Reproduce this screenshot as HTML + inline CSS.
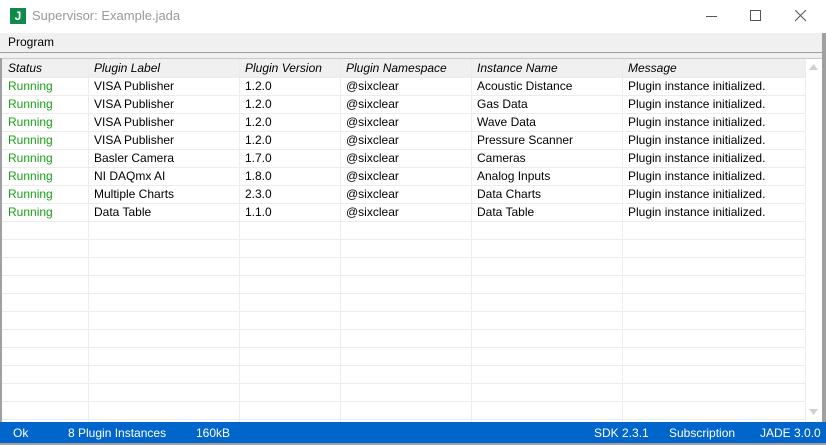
<!DOCTYPE html>
<html><head><style>
*{margin:0;padding:0;box-sizing:border-box}
body{width:826px;height:445px;overflow:hidden;background:#fff;font-family:"Liberation Sans",sans-serif;font-size:12px;color:#000;position:relative}
.a{position:absolute}
.t{position:absolute;white-space:nowrap;line-height:18px}
.hl{position:absolute;left:2px;width:803px;height:1px;background:#ececec}
.vl{position:absolute;top:59px;height:363px;width:1px;background:#ececec}
</style></head><body>
<div class="a" style="left:0;top:0;width:826px;height:33px;background:#fff"></div>
<div class="a" style="left:10px;top:8px;width:16px;height:16px;background:#0f8a4a;color:#fff;font-weight:bold;font-size:12px;line-height:16px;text-align:center">J</div>
<div class="t" style="left:32px;top:7px;font-size:13px;color:#999">Supervisor: Example.jada</div>
<div class="a" style="left:706px;top:16px;width:11px;height:1px;background:#555"></div>
<div class="a" style="left:750px;top:10px;width:11px;height:11px;border:1px solid #555"></div>
<svg class="a" style="left:795px;top:10px" width="12" height="12"><path d="M0 0L11 11M11 0L0 11" stroke="#555" stroke-width="1"/></svg>
<div class="a" style="left:0;top:33px;width:826px;height:19px;background:#f0f0f0"></div>
<div class="t" style="left:8px;top:33px;font-size:12px">Program</div>
<div class="a" style="left:0;top:52px;width:826px;height:1px;background:#a0a0a0"></div>
<div class="a" style="left:0;top:53px;width:826px;height:5px;background:#f0f0f0"></div>
<div class="a" style="left:0;top:58px;width:2px;height:366px;background:#a0a0a0"></div>
<div class="a" style="left:822px;top:33px;width:4px;height:412px;background:#a0a0a0"></div>
<div class="a" style="left:2px;top:58px;width:820px;height:1px;background:#c8c8c8"></div>
<div class="a" style="left:2px;top:59px;width:803px;height:18px;background:#f0f0f0"></div>
<div class="a" style="left:805px;top:59px;width:17px;height:363px;background:#fff;border-left:1px solid #ececec"></div>
<svg class="a" style="left:809px;top:64px" width="9" height="6"><path d="M0 6L4.5 0L9 6Z" fill="#d0d0d0"/></svg>
<svg class="a" style="left:809px;top:409px" width="9" height="6"><path d="M0 0L4.5 6L9 0Z" fill="#d0d0d0"/></svg>
<div class="hl" style="top:77px"></div><div class="hl" style="top:95px"></div><div class="hl" style="top:113px"></div><div class="hl" style="top:131px"></div><div class="hl" style="top:149px"></div><div class="hl" style="top:167px"></div><div class="hl" style="top:185px"></div><div class="hl" style="top:203px"></div><div class="hl" style="top:221px"></div><div class="hl" style="top:239px"></div><div class="hl" style="top:257px"></div><div class="hl" style="top:275px"></div><div class="hl" style="top:293px"></div><div class="hl" style="top:311px"></div><div class="hl" style="top:329px"></div><div class="hl" style="top:347px"></div><div class="hl" style="top:365px"></div><div class="hl" style="top:383px"></div><div class="hl" style="top:401px"></div><div class="hl" style="top:419px"></div>
<div class="vl" style="left:88px"></div><div class="vl" style="left:239px"></div><div class="vl" style="left:340px"></div><div class="vl" style="left:471px"></div><div class="vl" style="left:622px"></div>
<div style="position:absolute;left:0;top:59px;font-style:italic">
<div class="t" style="left:8px;top:0">Status</div><div class="t" style="left:94px;top:0">Plugin Label</div><div class="t" style="left:245px;top:0">Plugin Version</div><div class="t" style="left:346px;top:0">Plugin Namespace</div><div class="t" style="left:477px;top:0">Instance Name</div><div class="t" style="left:628px;top:0">Message</div>
</div>
<div style="position:absolute;left:0;top:77px">
<div class="t" style="left:8px;top:0;color:#1aa01a">Running</div><div class="t" style="left:94px;top:0">VISA Publisher</div><div class="t" style="left:245px;top:0">1.2.0</div><div class="t" style="left:346px;top:0">@sixclear</div><div class="t" style="left:477px;top:0">Acoustic Distance</div><div class="t" style="left:628px;top:0">Plugin instance initialized.</div>
<div class="t" style="left:8px;top:18px;color:#1aa01a">Running</div><div class="t" style="left:94px;top:18px">VISA Publisher</div><div class="t" style="left:245px;top:18px">1.2.0</div><div class="t" style="left:346px;top:18px">@sixclear</div><div class="t" style="left:477px;top:18px">Gas Data</div><div class="t" style="left:628px;top:18px">Plugin instance initialized.</div>
<div class="t" style="left:8px;top:36px;color:#1aa01a">Running</div><div class="t" style="left:94px;top:36px">VISA Publisher</div><div class="t" style="left:245px;top:36px">1.2.0</div><div class="t" style="left:346px;top:36px">@sixclear</div><div class="t" style="left:477px;top:36px">Wave Data</div><div class="t" style="left:628px;top:36px">Plugin instance initialized.</div>
<div class="t" style="left:8px;top:54px;color:#1aa01a">Running</div><div class="t" style="left:94px;top:54px">VISA Publisher</div><div class="t" style="left:245px;top:54px">1.2.0</div><div class="t" style="left:346px;top:54px">@sixclear</div><div class="t" style="left:477px;top:54px">Pressure Scanner</div><div class="t" style="left:628px;top:54px">Plugin instance initialized.</div>
<div class="t" style="left:8px;top:72px;color:#1aa01a">Running</div><div class="t" style="left:94px;top:72px">Basler Camera</div><div class="t" style="left:245px;top:72px">1.7.0</div><div class="t" style="left:346px;top:72px">@sixclear</div><div class="t" style="left:477px;top:72px">Cameras</div><div class="t" style="left:628px;top:72px">Plugin instance initialized.</div>
<div class="t" style="left:8px;top:90px;color:#1aa01a">Running</div><div class="t" style="left:94px;top:90px">NI DAQmx AI</div><div class="t" style="left:245px;top:90px">1.8.0</div><div class="t" style="left:346px;top:90px">@sixclear</div><div class="t" style="left:477px;top:90px">Analog Inputs</div><div class="t" style="left:628px;top:90px">Plugin instance initialized.</div>
<div class="t" style="left:8px;top:108px;color:#1aa01a">Running</div><div class="t" style="left:94px;top:108px">Multiple Charts</div><div class="t" style="left:245px;top:108px">2.3.0</div><div class="t" style="left:346px;top:108px">@sixclear</div><div class="t" style="left:477px;top:108px">Data Charts</div><div class="t" style="left:628px;top:108px">Plugin instance initialized.</div>
<div class="t" style="left:8px;top:126px;color:#1aa01a">Running</div><div class="t" style="left:94px;top:126px">Data Table</div><div class="t" style="left:245px;top:126px">1.1.0</div><div class="t" style="left:346px;top:126px">@sixclear</div><div class="t" style="left:477px;top:126px">Data Table</div><div class="t" style="left:628px;top:126px">Plugin instance initialized.</div>
</div>
<div class="a" style="left:0;top:422px;width:826px;height:21px;background:#0066cc"></div>
<div class="a" style="left:0;top:443px;width:826px;height:2px;background:#a0a0a0"></div>
<div style="position:absolute;left:0;top:424px;color:#fff">
<div class="t" style="left:13px;top:0">Ok</div><div class="t" style="left:68px;top:0">8 Plugin Instances</div><div class="t" style="left:196px;top:0">160kB</div><div class="t" style="left:594px;top:0">SDK 2.3.1</div><div class="t" style="left:669px;top:0">Subscription</div><div class="t" style="left:760px;top:0">JADE 3.0.0</div>
</div>
</body></html>
